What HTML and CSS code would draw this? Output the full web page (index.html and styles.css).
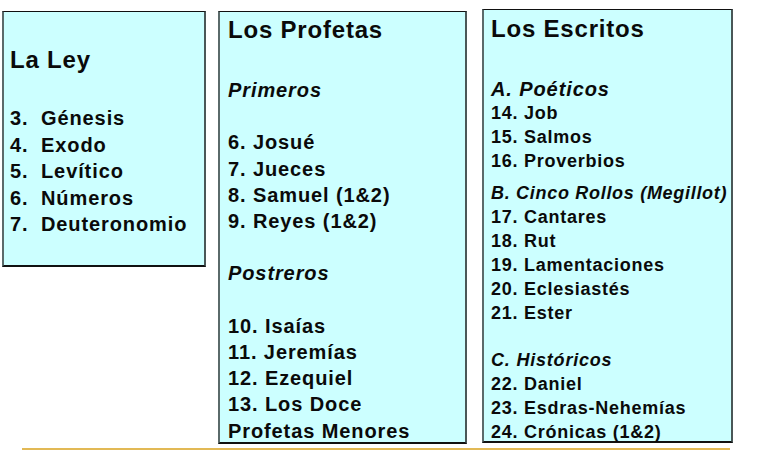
FILE: index.html
```html
<!DOCTYPE html>
<html lang="es">
<head>
<meta charset="utf-8">
<title>Tanaj</title>
<link rel="stylesheet" href="styles.css">
</head>
<body>
<div class="slide">
  <div class="columns">
    <section class="box box-ley">
      <h2 class="title">La Ley</h2>
      <ol class="list">
        <li><span class="num">3.</span>Génesis</li>
        <li><span class="num">4.</span>Exodo</li>
        <li><span class="num">5.</span>Levítico</li>
        <li><span class="num">6.</span>Números</li>
        <li><span class="num">7.</span>Deuteronomio</li>
      </ol>
    </section>
    <section class="box box-profetas">
      <h2 class="title">Los Profetas</h2>
      <div class="lines">
        <div class="sub">Primeros</div>
        <div class="blank"></div>
        <div>6. Josué</div>
        <div>7. Jueces</div>
        <div>8. Samuel (1&amp;2)</div>
        <div>9. Reyes (1&amp;2)</div>
        <div class="blank"></div>
        <div class="sub">Postreros</div>
        <div class="blank"></div>
        <div>10. Isaías</div>
        <div>11. Jeremías</div>
        <div>12. Ezequiel</div>
        <div>13. Los Doce</div>
        <div>Profetas Menores</div>
      </div>
    </section>
    <section class="box box-escritos">
      <h2 class="title">Los Escritos</h2>
      <div class="lines">
        <div class="sub sub-a">A. Poéticos</div>
        <div>14. Job</div>
        <div>15. Salmos</div>
        <div>16. Proverbios</div>
        <div class="sub sub-b">B. Cinco Rollos (Megillot)</div>
        <div>17. Cantares</div>
        <div>18. Rut</div>
        <div>19. Lamentaciones</div>
        <div>20. Eclesiastés</div>
        <div>21. Ester</div>
        <div class="sub sub-c">C. Históricos</div>
        <div>22. Daniel</div>
        <div>23. Esdras-Nehemías</div>
        <div>24. Crónicas (1&amp;2)</div>
      </div>
    </section>
  </div>
  <div class="rule"></div>
</div>
</body>
</html>
```
FILE: styles.css
```css
html, body {
  margin: 0;
  padding: 0;
  background: #ffffff;
}

body {
  font-family: "Liberation Sans", Arial, sans-serif;
  font-weight: bold;
  color: #0a0a0a;
  width: 759px;
  height: 467px;
  overflow: hidden;
}

.columns {
  display: flex;
  align-items: flex-start;
  padding-left: 2px;
}

.box {
  box-sizing: border-box;
  background: #ccffff;
  border-top: 1px solid #111;
  border-bottom: 2px solid #111;
  border-left: 2px solid #5a6a6a;
  border-right: 2px solid #4a5757;
}

.title {
  margin: 0;
  font-size: 24px;
  font-weight: bold;
  line-height: 30px;
  letter-spacing: 0.8px;
}

.sub {
  font-style: italic;
}

.blank {
  height: 26.2px;
}

/* La Ley */
.box-ley {
  width: 204px;
  height: 256px;
  margin-top: 11px;
  padding: 33px 0 0 6px;
}

.list {
  list-style: none;
  margin: 30px 0 0;
  padding: 0;
  font-size: 20px;
  line-height: 26.5px;
  letter-spacing: 0.9px;
}

.num {
  display: inline-block;
  width: 31px;
}

/* Los Profetas */
.box-profetas {
  width: 249px;
  height: 433px;
  margin-top: 11px;
  margin-left: 12px;
  padding: 3px 0 0 8px;
}

.box-profetas .lines {
  margin-top: 32px;
  font-size: 20px;
  line-height: 26.2px;
  letter-spacing: 0.9px;
}

/* Los Escritos */
.box-escritos {
  width: 251px;
  height: 434px;
  margin-top: 9px;
  margin-left: 15px;
  padding: 4px 0 0 7px;
}

.box-escritos .lines {
  margin-top: 33px;
  font-size: 18px;
  line-height: 24px;
  letter-spacing: 0.75px;
}

.sub-a {
  font-size: 20px;
  letter-spacing: 0.9px;
}

.sub-b {
  margin-top: 8px;
  letter-spacing: 0.7px;
}

.sub-c {
  margin-top: 23px;
  letter-spacing: 0.8px;
}

.rule {
  height: 2px;
  background: #e2b955;
  margin: 4px 0 0 22px;
  width: 708px;
}
```
